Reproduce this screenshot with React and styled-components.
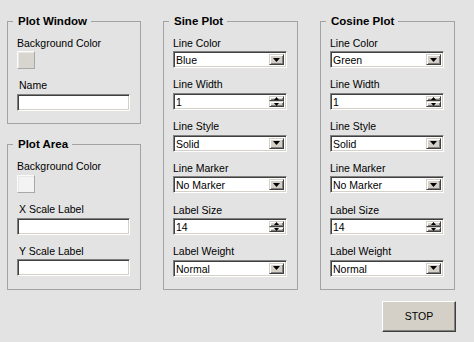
import styled, { createGlobalStyle, css } from "styled-components";

const GlobalStyle = createGlobalStyle`
	html, body {
		margin: 0;
		background: #e3e3e3;
	}
	body {
		font-family: "Liberation Sans", Arial, sans-serif;
		font-size: 10.5px;
		color: #000;
	}
`;

const Page = styled.div`
	width: 474px;
	height: 342px;
	box-sizing: border-box;
	padding: 14.5px 0 0 7px;
	display: flex;
	flex-direction: column;
	overflow: hidden;
`;

const Columns = styled.div`
	display: flex;
	gap: 22px;
	align-items: stretch;
`;

const Column = styled.div`
	width: ${(p) => p.$w}px;
	display: flex;
	flex-direction: column;
	gap: 14.5px;
`;

const Group = styled.fieldset`
	margin: 0;
	padding: 0 10px 12px 9px;
	border: 1px solid #a3a3a3;
	min-width: 0;
	flex: ${(p) => (p.$grow ? 1 : "none")};
	display: flex;
	flex-direction: column;
	gap: 10.3px;
`;

const Legend = styled.legend`
	margin-left: -4px;
	padding: 0 4px 0 5px;
	font-weight: bold;
	font-size: 11.5px;
	line-height: 13px;
`;

const Field = styled.div`
	display: flex;
	flex-direction: column;
	gap: 1.5px;
	&:first-of-type {
		margin-top: 9px;
	}
`;

const Label = styled.div`
	line-height: 13px;
	white-space: nowrap;
	padding-left: ${(p) => (p.$indent ? 2 : 0)}px;
`;

const sunken = css`
	box-sizing: border-box;
	height: 17px;
	width: 100%;
	border: 1px solid;
	border-color: #808080 #ffffff #ffffff #808080;
	box-shadow: inset 1px 1px 0 #404040, inset -1px -1px 0 #d4d0c8;
	background: #fff;
`;

const TextBox = styled.div`
	${sunken}
`;

const Combo = styled.div`
	${sunken}
	display: flex;
	align-items: stretch;
	justify-content: space-between;
	padding: 2px;
	line-height: 13px;
`;

const Value = styled.span`
	white-space: nowrap;
`;

const raised = css`
	box-sizing: border-box;
	background: #d4d0c8;
	border: 1px solid;
	border-color: #d4d0c8 #404040 #404040 #d4d0c8;
	box-shadow: inset 1px 1px 0 #fff, inset -1px -1px 0 #808080;
`;

const DropButton = styled.div`
	${raised}
	width: 15px;
	display: flex;
	align-items: center;
	justify-content: center;
`;

const SpinButtons = styled.div`
	width: 15px;
	display: flex;
	flex-direction: column;
`;

const SpinButton = styled.div`
	${raised}
	flex: 1;
	display: flex;
	align-items: center;
	justify-content: center;
`;

const Swatch = styled.div`
	width: 18px;
	height: 18px;
	box-sizing: border-box;
	background: ${(p) => p.$color};
	border: 1px solid;
	border-color: #fbfbfb #a8a8a8 #a8a8a8 #fbfbfb;
	box-shadow: inset 1px 1px 0 #e8e8e8;
`;

const Footer = styled.div`
	display: flex;
	justify-content: flex-end;
	padding-right: 18px;
	margin-top: 11px;
`;

const StopButton = styled.button`
	${raised}
	width: 74px;
	height: 31px;
	font: inherit;
	color: #000;
	padding: 0;
	border-color: #fff #404040 #404040 #fff;
	box-shadow: inset -1px -1px 0 #808080;
`;

const Arrow = ({ up, w = 7, h = 4 }) => (
	<svg width={w} height={h} viewBox={`0 0 ${w} ${h}`}>
		<path
			d={up ? `M0 ${h}H${w}L${w / 2} 0Z` : `M0 0H${w}L${w / 2} ${h}Z`}
			fill="#000"
		/>
	</svg>
);

const Select = ({ value }) => (
	<Combo>
		<Value>{value}</Value>
		<DropButton>
			<Arrow />
		</DropButton>
	</Combo>
);

const Spinner = ({ value }) => (
	<Combo>
		<Value>{value}</Value>
		<SpinButtons>
			<SpinButton>
				<Arrow up w={5} h={3} />
			</SpinButton>
			<SpinButton>
				<Arrow w={5} h={3} />
			</SpinButton>
		</SpinButtons>
	</Combo>
);

const PlotSettings = ({ title, color }) => (
	<Group $grow>
		<Legend>{title}</Legend>
		<Field>
			<Label>Line Color</Label>
			<Select value={color} />
		</Field>
		<Field>
			<Label>Line Width</Label>
			<Spinner value="1" />
		</Field>
		<Field>
			<Label>Line Style</Label>
			<Select value="Solid" />
		</Field>
		<Field>
			<Label>Line Marker</Label>
			<Select value="No Marker" />
		</Field>
		<Field>
			<Label>Label Size</Label>
			<Spinner value="14" />
		</Field>
		<Field>
			<Label>Label Weight</Label>
			<Select value="Normal" />
		</Field>
	</Group>
);

export default function App() {
	return (
		<>
			<GlobalStyle />
			<Page>
				<Columns>
					<Column $w={134}>
						<Group>
							<Legend>Plot Window</Legend>
							<Field>
								<Label>Background Color</Label>
								<Swatch $color="#d8d5ce" />
							</Field>
							<Field>
								<Label $indent>Name</Label>
								<TextBox />
							</Field>
						</Group>
						<Group $grow>
							<Legend>Plot Area</Legend>
							<Field>
								<Label>Background Color</Label>
								<Swatch $color="#f3f3f3" />
							</Field>
							<Field>
								<Label $indent>X Scale Label</Label>
								<TextBox />
							</Field>
							<Field>
								<Label $indent>Y Scale Label</Label>
								<TextBox />
							</Field>
						</Group>
					</Column>
					<Column $w={135}>
						<PlotSettings title="Sine Plot" color="Blue" />
					</Column>
					<Column $w={135}>
						<PlotSettings title="Cosine Plot" color="Green" />
					</Column>
				</Columns>
				<Footer>
					<StopButton>STOP</StopButton>
				</Footer>
			</Page>
		</>
	);
}
